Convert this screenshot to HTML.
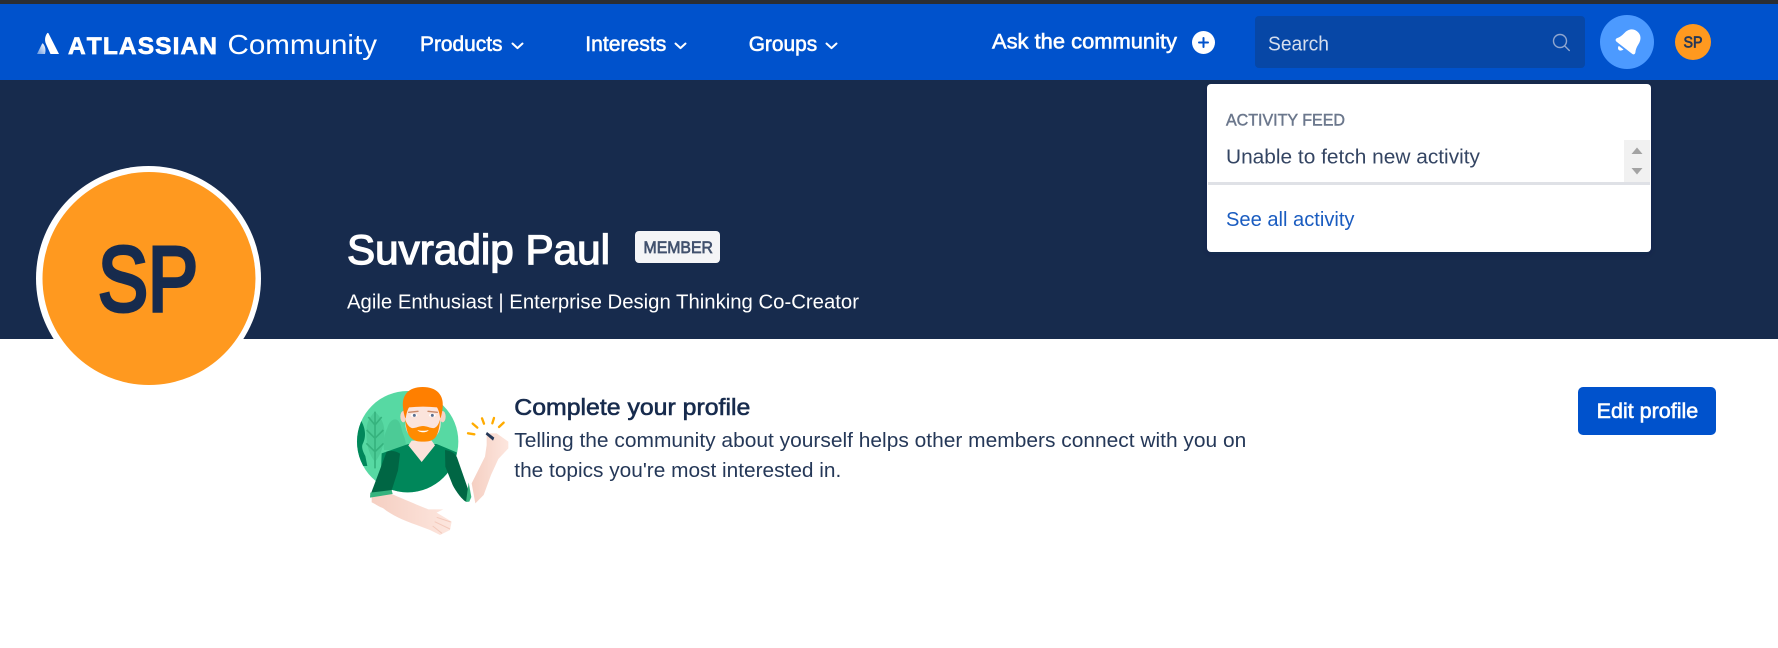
<!DOCTYPE html>
<html lang="en">
<head>
<meta charset="utf-8">
<title>Suvradip Paul - Atlassian Community</title>
<style>
html,body{margin:0;padding:0;width:1778px;height:648px;overflow:hidden;background:#fff}
svg{display:block}
text{font-family:"Liberation Sans",Arial,sans-serif}
.b{font-weight:700}
.w{fill:#fff;stroke:#fff;stroke-width:.55}
</style>
</head>
<body>
<svg xmlns="http://www.w3.org/2000/svg" width="1778" height="648" viewBox="0 0 1778 648">
<defs>
<linearGradient id="lg" x1="1" y1="0" x2="0" y2="1"><stop offset="0" stop-color="#fff"/><stop offset="1" stop-color="#fff" stop-opacity=".4"/></linearGradient>
<linearGradient id="arm" x1="0" y1="0" x2="1" y2="0"><stop offset="0" stop-color="#f5cfc2"/><stop offset="1" stop-color="#fde6de"/></linearGradient>
<clipPath id="cc"><circle cx="203" cy="215" r="152"/></clipPath>
<filter id="sh" x="-10%" y="-10%" width="120%" height="120%"><feDropShadow dx="0" dy="2" stdDeviation="3" flood-color="#091e42" flood-opacity=".25"/></filter>
</defs>

<rect width="1778" height="648" fill="#fff"/>
<rect width="1778" height="339" fill="#172b4d"/>
<rect width="1778" height="4" fill="#2b2e33"/>
<rect width="1778" height="76" y="4" fill="#0052cc"/>

<!-- logo -->
<path d="M47 33.500c.4-.8 1.200-.8 1.600 0L59 54H50.500L45.800 43.500c-1.300-3.400-.9-7 1.200-10z" fill="#fff"/>
<path d="M43.200 43.800c-.4-.6-.9-.5-1.200.1L37 54h8c1-3.500.6-7.300-1.800-10.200z" fill="url(#lg)"/>
<text x="68" y="54" font-size="24.500" class="b" fill="#fff" stroke="#fff" stroke-width=".7" style="font-kerning:none" textLength="149" lengthAdjust="spacing">ATLASSIAN</text>
<text x="227.500" y="54" font-size="28" fill="#fff" textLength="149.500" lengthAdjust="spacingAndGlyphs">Community</text>

<!-- nav -->
<text x="420" y="51" font-size="21" class="w" textLength="82.500" lengthAdjust="spacingAndGlyphs">Products</text>
<path d="M512.500 43.500l5 4.600 5-4.600" fill="none" stroke="#fff" stroke-width="2" stroke-linecap="round" stroke-linejoin="round"/>
<text x="585.300" y="51" font-size="21" class="w" textLength="81" lengthAdjust="spacingAndGlyphs">Interests</text>
<path d="M675.500 43.500l5 4.600 5-4.600" fill="none" stroke="#fff" stroke-width="2" stroke-linecap="round" stroke-linejoin="round"/>
<text x="748.700" y="51" font-size="21" class="w" textLength="68.500" lengthAdjust="spacingAndGlyphs">Groups</text>
<path d="M826.500 43.500l5 4.600 5-4.600" fill="none" stroke="#fff" stroke-width="2" stroke-linecap="round" stroke-linejoin="round"/>

<text x="992" y="48.500" font-size="21" class="w" textLength="185" lengthAdjust="spacingAndGlyphs">Ask the community</text>
<circle cx="1203.500" cy="42.500" r="11.500" fill="#fff"/>
<path d="M1203.500 38v9M1199 42.500h9" stroke="#0052cc" stroke-width="2" stroke-linecap="round"/>

<!-- search -->
<rect x="1255" y="16" width="330" height="52" rx="4" fill="#0747a6"/>
<text x="1268" y="50.500" font-size="20" fill="#d5deee" textLength="61" lengthAdjust="spacingAndGlyphs">Search</text>
<circle cx="1560" cy="41" r="6.500" fill="none" stroke="#8fa6cf" stroke-width="1.400"/>
<path d="M1564.800 46l4.500 4.500" stroke="#8fa6cf" stroke-width="1.400" stroke-linecap="round"/>

<!-- bell -->
<circle cx="1627" cy="42" r="27" fill="#4c9aff"/>
<g transform="translate(1624.500 47.500) rotate(38)" fill="#fff">
  <path d="M-11.500 -.3Q-12.500 -1.500 -11.500 -3Q-9.500 -6 -9 -11C-8.500 -17 -5 -20.500 0 -20.500C5 -20.500 8.500 -17 9 -11Q9.500 -6 11.500 -3Q12.500 -1.500 11.500 -.3Q11 .3 10 .3H-10Q-11 .3 -11.500 -.3Z"/>
  <path d="M-5.500 2.200C-5.500 6 -1 7 .5 2.200Z"/>
</g>

<!-- small avatar -->
<circle cx="1693" cy="42" r="18" fill="#ff991f"/>
<text x="1683.500" y="47.500" font-size="15.500" fill="#253858" stroke="#253858" stroke-width=".7" textLength="19" lengthAdjust="spacingAndGlyphs">SP</text>

<!-- big avatar -->
<circle cx="148.500" cy="278.500" r="112.500" fill="#fff"/>
<circle cx="149" cy="278.500" r="106.500" fill="#ff991f"/>
<text x="98" y="310.500" font-size="92" fill="#172b4d" stroke="#172b4d" stroke-width="4" textLength="100" lengthAdjust="spacingAndGlyphs">SP</text>

<!-- name -->
<text x="347" y="264" font-size="42" fill="#fff" stroke="#fff" stroke-width="1.300" textLength="263" lengthAdjust="spacingAndGlyphs">Suvradip Paul</text>
<rect x="635" y="231" width="85" height="32" rx="4" fill="#f4f5f7"/>
<text x="643.500" y="253" font-size="17" fill="#42526e" stroke="#42526e" stroke-width=".7" textLength="69.500" lengthAdjust="spacingAndGlyphs">MEMBER</text>
<text x="347" y="308.500" font-size="20" fill="#fff" textLength="512" lengthAdjust="spacingAndGlyphs">Agile Enthusiast | Enterprise Design Thinking Co-Creator</text>

<!-- dropdown -->
<rect x="1207" y="84" width="444" height="168" rx="4" fill="#fff" filter="url(#sh)"/>
<text x="1226" y="125.500" font-size="16.500" fill="#6b778c" stroke="#6b778c" stroke-width=".45" textLength="119" lengthAdjust="spacingAndGlyphs">ACTIVITY FEED</text>
<text x="1226" y="163.500" font-size="20" fill="#344563" textLength="254" lengthAdjust="spacingAndGlyphs">Unable to fetch new activity</text>
<rect x="1624" y="140" width="26" height="42" fill="#f1f1f1"/>
<path d="M1637 147.500l5.500 6.500h-11z" fill="#a3a3a3"/>
<path d="M1637 174.500l5.500-6.500h-11z" fill="#a3a3a3"/>
<rect x="1208" y="182" width="442" height="3" fill="#dfe1e6"/>
<text x="1226" y="226" font-size="20" fill="#1a5cc0" textLength="128.500" lengthAdjust="spacingAndGlyphs">See all activity</text>

<!-- illustration -->
<g transform="translate(340 370) scale(.33333)">
  <circle cx="203" cy="215" r="152" fill="#57d9a3"/>
  <g clip-path="url(#cc)">
    <path d="M50 150h12c14 22 18 50 6 72-4 8 0 22 8 36l6 30H50z" fill="#00875a"/>
    <path d="M105 125c-14 14-26 30-26 62 0 40 10 70 26 88 16-18 28-48 28-88 0-32-14-48-28-62z" fill="#4ccb96"/>
    <path d="M105 125v170M105 165l-20-24M105 165l20-24M105 205l-25-25M105 205l25-25M105 245l-26-25M105 245l26-25" stroke="#36b37e" stroke-width="5" fill="none"/>
    <path d="M132 240c-4-28 2-50 10-66 5-22 24-34 34-20 8 10 8 26 14 40 6 14 10 30 6 46z" fill="#4ccb96"/>
    <path d="M125 250l80-28 85 0 60 25 10 130H120z" fill="#00875a"/>
  </g>
  <!-- neck / collar -->
  <path d="M205 226l40 50 40-50-10-14h-60z" fill="#fbe2da"/>
  <!-- arm left -->
  <path d="M95 380l55-10c20 8 70 30 115 48l45 0-20 10 45 27-5 25-30 15-30-15-40-15c-40-14-75-30-100-50-15-6-25-14-35-18z" fill="url(#arm)"/>
  <path d="M290 442l42 14M284 455l46 22M278 468l28 22" stroke="#f3c9bb" stroke-width="3" fill="none"/>
  <!-- sleeves -->
  <path d="M140 245c14-4 28-2 40 6l-6 50-19 60-62 9z" fill="#006644"/>
  <path d="M91 368l64-8 3 12-68 11z" fill="#36b37e"/>
  <path d="M315 240c18 2 30 10 36 22l41 118-14 15c-10-4-30-30-40-50l-22-55z" fill="#006644"/>
  <path d="M386 337l8 44-6 14-10 1z" fill="#36b37e"/>
  <!-- right arm -->
  <path d="M395 340l40-80 5-35 0-35 30 0 35 25 0 20-30 32-22 48-22 60-25 25z" fill="url(#arm)"/>
  <path d="M441 186l22 17-4 9-22-19z" fill="#253858"/>
  <path d="M384 190l19 3M398 161l14 12M426 145l6 16M462 144l-5 16M491 158l-14 13" stroke="#ffab00" stroke-width="7" stroke-linecap="round"/>
  <!-- head -->
  <ellipse cx="190" cy="140" rx="9" ry="17" fill="#f7d3c6"/>
  <ellipse cx="308" cy="140" rx="9" ry="17" fill="#f7d3c6"/>
  <path d="M196 95h106v65c0 34-24 54-53 54s-53-20-53-54z" fill="#fbe4dc"/>
  <path d="M195 146c3 26 6 46 18 58 12 10 22 11 36 11 14 0 24-1 36-11 10-12 13-32 16-58-4 14-8 24-18 28-10 2-22-6-34-6s-24 8-34 6c-10-4-16-14-20-28z" fill="#ff8b00"/>
  <path d="M232 180c10 3 24 3 34 0-4 9-28 9-34 0z" fill="#fff"/>
  <path d="M189 112c-4-36 16-61 59-61 43 0 64 25 60 61-1 12-4 26-7 34-2-12-4-24-10-34-28-3-56-3-84 0-6 10-8 22-10 34-4-8-7-22-8-34z" fill="#ff7f00"/>
  <path d="M206 127l28-3M264 124l28 3" stroke="#c98a6a" stroke-width="4" stroke-linecap="round"/>
  <ellipse cx="222" cy="136" rx="10" ry="5" fill="#fff"/><circle cx="223" cy="136" r="4.500" fill="#5a6f8f"/>
  <ellipse cx="277" cy="136" rx="10" ry="5" fill="#fff"/><circle cx="277" cy="136" r="4.500" fill="#5a6f8f"/>
</g>

<!-- profile prompt -->
<text x="514.300" y="415" font-size="23" fill="#172b4d" stroke="#172b4d" stroke-width=".6" textLength="236" lengthAdjust="spacingAndGlyphs">Complete your profile</text>
<text x="514.300" y="447" font-size="20" fill="#253858" textLength="732" lengthAdjust="spacingAndGlyphs">Telling the community about yourself helps other members connect with you on</text>
<text x="514.300" y="477" font-size="20" fill="#253858" textLength="327" lengthAdjust="spacingAndGlyphs">the topics you're most interested in.</text>

<!-- button -->
<rect x="1578" y="387" width="138" height="48" rx="5" fill="#0052cc"/>
<text x="1596.700" y="418" font-size="21" class="w" textLength="101.500" lengthAdjust="spacingAndGlyphs">Edit profile</text>
</svg>
</body>
</html>
